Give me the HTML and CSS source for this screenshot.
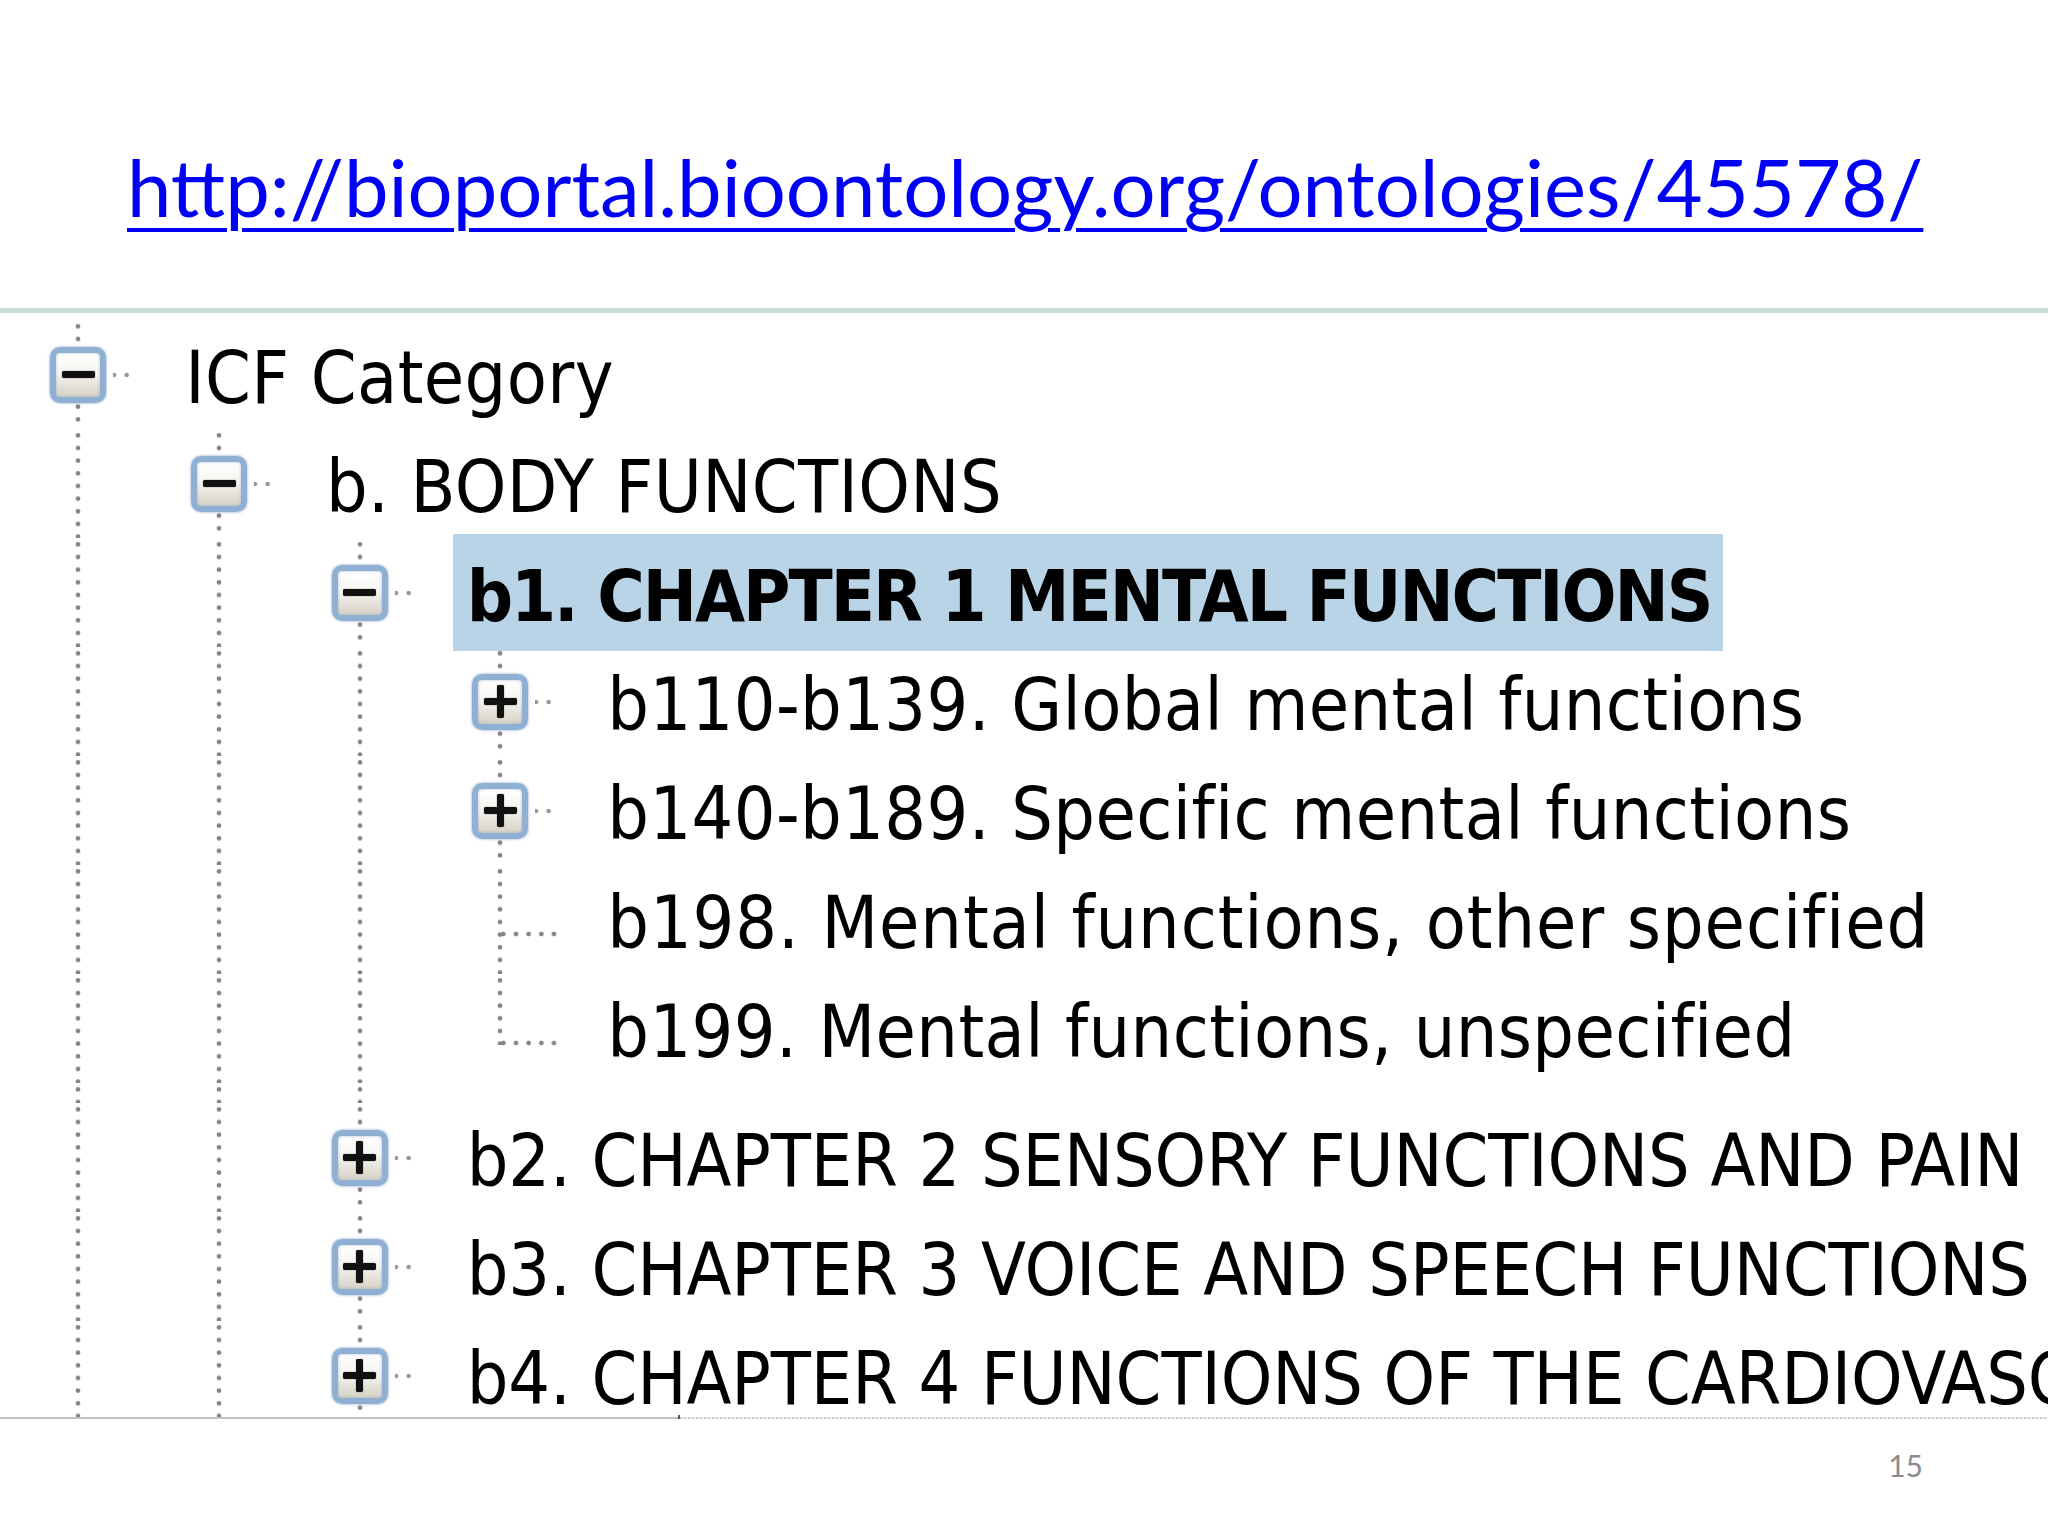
FILE: index.html
```html
<!DOCTYPE html>
<html lang="en">
<head>
<meta charset="utf-8">
<title>ICF Category – BioPortal</title>
<link rel="stylesheet" href="styles.css">
</head>
<body>
<div class="slide">
  <header class="title">
    <a class="url" href="#">http://bioportal.bioontology.org/ontologies/45578/</a>
  </header>
  <div class="rule"></div>

  <div class="tree">
    <div class="row">
      <div class="cell node more"><span class="icon minus"></span><span class="stub"></span></div>
      <span class="label">ICF Category</span>
    </div>
    <div class="row">
      <div class="cell pipe"></div>
      <div class="cell node more"><span class="icon minus"></span><span class="stub"></span></div>
      <span class="label">b. BODY FUNCTIONS</span>
    </div>
    <div class="row">
      <div class="cell pipe"></div>
      <div class="cell pipe"></div>
      <div class="cell node more"><span class="icon minus"></span><span class="stub"></span></div>
      <span class="label selected">b1. CHAPTER 1 MENTAL FUNCTIONS</span>
    </div>
    <div class="row">
      <div class="cell pipe"></div>
      <div class="cell pipe"></div>
      <div class="cell pipe"></div>
      <div class="cell node more"><span class="icon plus"></span><span class="stub"></span></div>
      <span class="label">b110-b139. Global mental functions</span>
    </div>
    <div class="row">
      <div class="cell pipe"></div>
      <div class="cell pipe"></div>
      <div class="cell pipe"></div>
      <div class="cell node more"><span class="icon plus"></span><span class="stub"></span></div>
      <span class="label">b140-b189. Specific mental functions</span>
    </div>
    <div class="row">
      <div class="cell pipe"></div>
      <div class="cell pipe"></div>
      <div class="cell pipe"></div>
      <div class="cell leaf more"><span class="elbow"></span></div>
      <span class="label wide">b198. Mental functions, other specified</span>
    </div>
    <div class="row">
      <div class="cell pipe"></div>
      <div class="cell pipe"></div>
      <div class="cell pipe"></div>
      <div class="cell leaf"><span class="elbow"></span></div>
      <span class="label">b199. Mental functions, unspecified</span>
    </div>
    <div class="row spacer">
      <div class="cell pipe"></div>
      <div class="cell pipe"></div>
      <div class="cell pipe"></div>
    </div>
    <div class="row">
      <div class="cell pipe"></div>
      <div class="cell pipe"></div>
      <div class="cell node more"><span class="icon plus"></span><span class="stub"></span></div>
      <span class="label caps">b2. CHAPTER 2 SENSORY FUNCTIONS AND PAIN</span>
    </div>
    <div class="row">
      <div class="cell pipe"></div>
      <div class="cell pipe"></div>
      <div class="cell node more"><span class="icon plus"></span><span class="stub"></span></div>
      <span class="label caps">b3. CHAPTER 3 VOICE AND SPEECH FUNCTIONS</span>
    </div>
    <div class="row">
      <div class="cell pipe"></div>
      <div class="cell pipe"></div>
      <div class="cell node more"><span class="icon plus"></span><span class="stub"></span></div>
      <span class="label caps">b4. CHAPTER 4 FUNCTIONS OF THE CARDIOVASCULAR, HAEMATOLOGICAL, IMMUNOLOGICAL AND RESPIRATORY SYSTEMS</span>
    </div>
  </div>

  <div class="tree-bottom"><span class="solid"></span><span class="tick"></span><span class="dotted"></span></div>

  <footer class="footer"><span class="pagenum">15</span></footer>
</div>
</body>
</html>
```

FILE: styles.css
```css
html, body {
  margin: 0;
  padding: 0;
  background: #ffffff;
}

.slide {
  width: 2048px;
  height: 1536px;
  overflow: hidden;
  background: #ffffff;
  display: flex;
  flex-direction: column;
}

/* ---------- title ---------- */
.title {
  height: 308px;
  box-sizing: border-box;
  padding: 139px 0 0 127px;
  flex: none;
}

.url {
  font-family: Lato, "Liberation Sans", sans-serif;
  font-size: 79.6px;
  line-height: 1.2;
  color: #0000f5;
  text-decoration: underline;
  text-decoration-thickness: 4px;
  text-underline-offset: 11px;
  white-space: nowrap;
}

.rule {
  height: 5px;
  background: #c8dbd5;
  flex: none;
}

/* ---------- tree ---------- */
.tree {
  height: 1104px;
  flex: none;
  overflow: hidden;
  box-sizing: border-box;
  padding: 7px 0 0 8px;
  font-family: "DejaVu Sans Condensed", "DejaVu Sans", sans-serif;
  font-stretch: condensed;
  font-size: 73px;
  letter-spacing: 0.4px;
  color: #000000;
}

.row {
  display: flex;
  align-items: center;
  height: 109px;
  white-space: nowrap;
}

.row.spacer {
  height: 20px;
}

.cell {
  flex: none;
  width: 140.7px;
  align-self: stretch;
  position: relative;
  display: flex;
  align-items: center;
  justify-content: center;
}

/* dotted vertical line */
.pipe,
.node::before,
.node.more::after,
.leaf::before {
  background-image: radial-gradient(circle, #858585 0 1.8px, rgba(133,133,133,0) 2.8px);
  background-size: 6px 12.67px;
  background-repeat: repeat-y;
  background-position: center top;
}

.node::before,
.node.more::after,
.leaf::before {
  content: "";
  position: absolute;
  left: calc(50% - 3px);
  width: 6px;
}

.node::before {
  top: 0;
  height: 50%;
}

.node.more::after {
  top: 50%;
  bottom: 0;
}

.leaf::before {
  top: 0;
  height: calc(50% + 16px);
}

.leaf.more::before {
  height: 100%;
}

/* expander box */
.icon {
  position: relative;
  z-index: 1;
  width: 56px;
  height: 56px;
  box-sizing: border-box;
  border: 6px solid #8fb0d2;
  border-radius: 10px;
  background: linear-gradient(#ffffff 0%, #f6f5f1 45%, #d5d1c4 100%);
  box-shadow: 0 0 3px rgba(110,145,190,0.8), inset 0 0 3px rgba(140,165,200,0.7);
  display: flex;
  align-items: center;
  justify-content: center;
}

.icon::before {
  content: "";
  width: 33px;
  height: 7px;
  border-radius: 2px;
  background: #111111;
  box-shadow: 0 0 1px #111;
}

.icon.plus::after {
  content: "";
  position: absolute;
  width: 7px;
  height: 33px;
  border-radius: 2px;
  background: #111111;
  box-shadow: 0 0 1px #111;
}

/* the two dots right of the box */
.stub {
  position: absolute;
  left: calc(50% + 35px);
  top: calc(50% - 3px);
  width: 20px;
  height: 6px;
  background-image: radial-gradient(circle, #959595 0 1.7px, rgba(149,149,149,0) 2.7px);
  background-size: 12.67px 6px;
  background-repeat: repeat-x;
  background-position: right center;
}

/* leaf connector */
.elbow {
  position: absolute;
  left: calc(50% - 3px);
  top: calc(50% + 11px);
  width: 60px;
  height: 6px;
  background-image: radial-gradient(circle, #858585 0 1.8px, rgba(133,133,133,0) 2.8px);
  background-size: 12.67px 6px;
  background-repeat: repeat-x;
  background-position: left center;
}

.label {
  margin-left: 36.6px;
  padding-top: 7px;
  line-height: 1.15;
}

.label.wide {
  letter-spacing: 0.9px;
}

.label.caps {
  letter-spacing: -0.1px;
}

.label.selected {
  font-weight: bold;
  font-size: 72px;
  letter-spacing: -2px;
  background: #b9d4e6;
  height: 117px;
  box-sizing: border-box;
  display: flex;
  align-items: center;
  margin-left: 22.6px;
  padding: 7px 12px 0 14px;
  flex: none;
}

/* ---------- bottom border of the tree panel ---------- */
.tree-bottom {
  display: flex;
  height: 2px;
  flex: none;
}

.tree-bottom .solid {
  width: 678px;
  background: #c2c2c2;
}

.tree-bottom .tick {
  width: 2px;
  margin-top: -2px;
  height: 4px;
  background: #555555;
}

.tree-bottom .dotted {
  flex: 1;
  background-image: repeating-linear-gradient(90deg, #c9c9c9 0 2px, #ececec 2px 4px);
}

/* ---------- footer ---------- */
.footer {
  display: flex;
  justify-content: flex-end;
  padding: 28px 125px 0 0;
}

.pagenum {
  font-family: Lato, "Liberation Sans", sans-serif;
  font-size: 30px;
  line-height: 1.2;
  color: #8c8c8c;
}
```
